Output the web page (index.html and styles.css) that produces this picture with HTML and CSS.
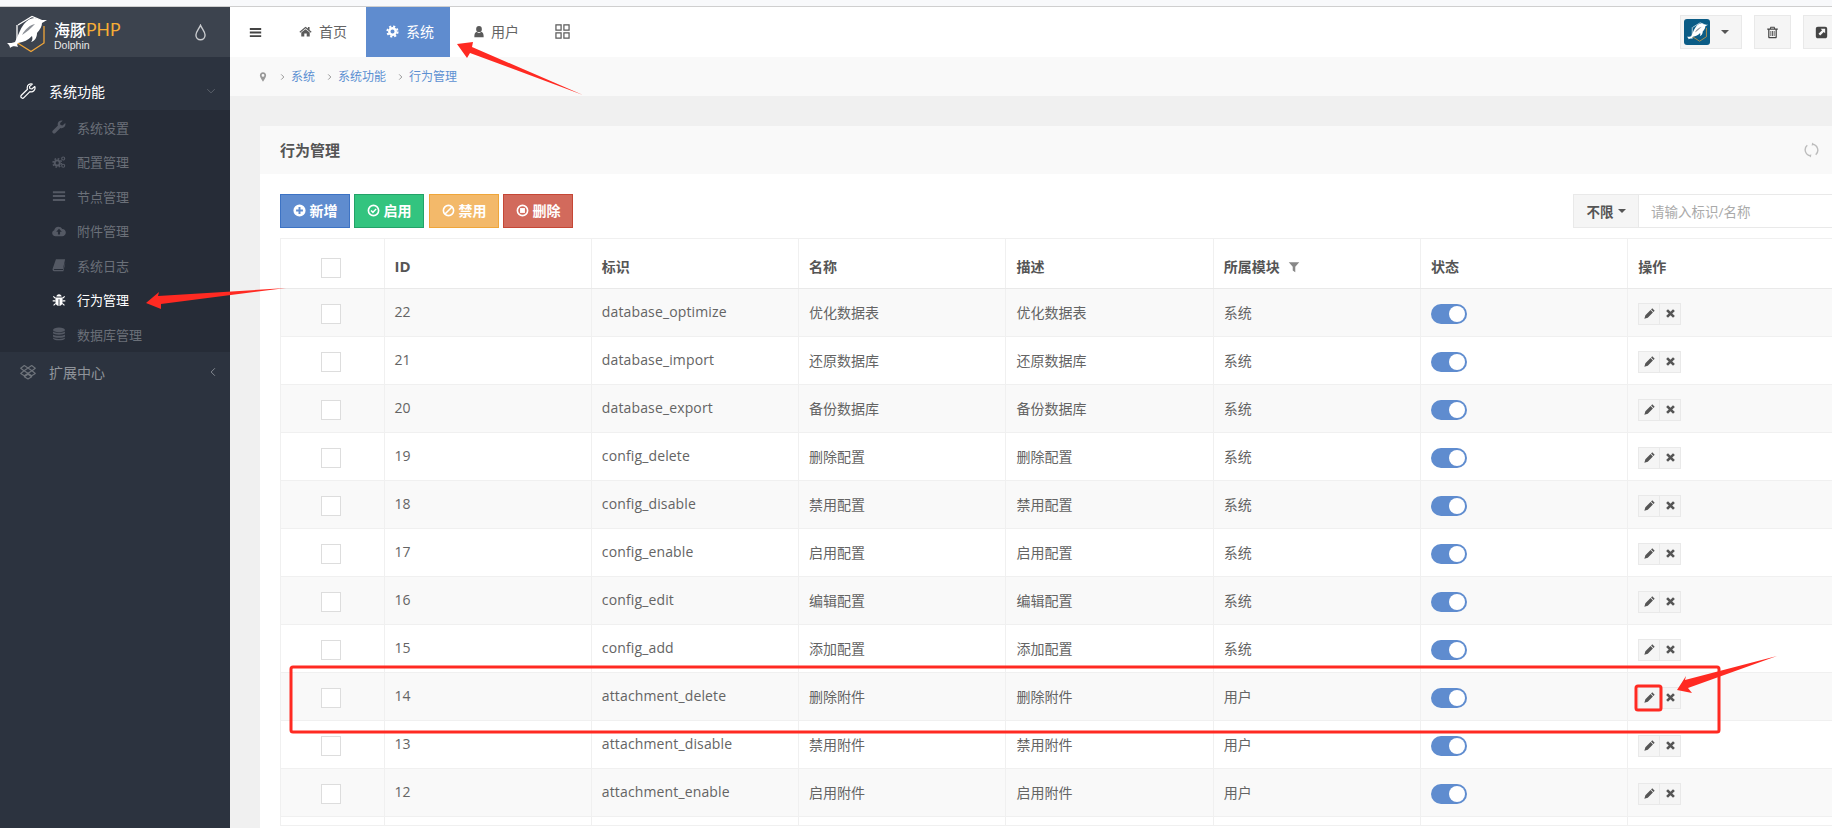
FILE: index.html
```html
<!DOCTYPE html>
<html lang="zh-CN">
<head>
<meta charset="utf-8">
<title>行为管理</title>
<link rel="stylesheet" href="styles.css">
</head>
<body>
<svg class="sprite" aria-hidden="true">
  <symbol id="i-dolphin" viewBox="0 0 40 38">
    <path d="M11 10 L25 1.500 L36 6" fill="none" stroke="currentColor" stroke-width="1.300"/>
    <path d="M10 10 V26" fill="none" stroke="currentColor" stroke-width="1.300"/>
    <path d="M9 27 L24 36.500 L37 28 V11" fill="none" stroke="#f0a63a" stroke-width="1.300"/>
    <path d="M40 5 L33 5 C28 1 22 3 17 9 C13 14 11 21 8 27 C6 28 3 28 0 28 C2 30 3 31 3 33 C5 31 8 31 11 32 C10 30 10 29 11 28 C17 27 21 25 25 21 C26 24 25 26 24 27 C28 26 30 22 30 18 C33 15 35 11 35 8 Z" fill="currentColor"/>
    <path d="M15 20 C18 14 23 10 28 9 C24 13 20 17 15 20 Z" fill="#3c434e" opacity=".6"/>
  </symbol>
  <symbol id="i-home" viewBox="0 0 16 16"><path d="M8 2 L0.500 8.200 L1.500 9.400 L8 4 L14.500 9.400 L15.500 8.200 L13 6.100 V2.500 H11 V4.400 Z M2.800 9.300 V14 H6.500 V10.500 H9.500 V14 H13.200 V9.300 L8 5.100 Z"/></symbol>
  <symbol id="i-cog" viewBox="0 0 16 16"><circle cx="8" cy="8" r="4" fill="none" stroke="currentColor" stroke-width="3"/><circle cx="8" cy="8" r="6.300" fill="none" stroke="currentColor" stroke-width="2.400" stroke-dasharray="2.600 2.350"/></symbol>
  <symbol id="i-user" viewBox="0 0 16 16"><ellipse cx="8" cy="4.800" rx="3.800" ry="4.300"/><path d="M1.800 15.500 C1.500 11 3 8.800 5.300 8.300 C6 9.500 7 10 8 10 C9 10 10 9.500 10.700 8.300 C13 8.800 14.500 11 14.200 15.500 Z"/></symbol>
  <symbol id="i-grid" viewBox="0 0 16 16"><path d="M1 1H6.500V6.500H1Z M9.500 1H15V6.500H9.500Z M1 9.500H6.500V15H1Z M9.500 9.500H15V15H9.500Z" fill="none" stroke="currentColor" stroke-width="1.300"/></symbol>
  <symbol id="i-bars" viewBox="0 0 16 16"><path d="M1 2.500H15V4.800H1Z M1 6.900H15V9.200H1Z M1 11.300H15V13.600H1Z"/></symbol>
  <symbol id="i-pin" viewBox="0 0 16 16"><path fill-rule="evenodd" d="M8 0.500 C4.800 0.500 3 2.800 3 5.500 C3 8.500 6.800 13 8 15.500 C9.200 13 13 8.500 13 5.500 C13 2.800 11.200 0.500 8 0.500 Z M8 3.300 A2.200 2.200 0 1 1 8 7.700 A2.200 2.200 0 1 1 8 3.300 Z"/></symbol>
  <symbol id="i-drop" viewBox="0 0 16 16"><path d="M8 1.200 C6.700 4.500 3.700 7.300 3.700 10.300 C3.700 13 5.600 14.800 8 14.800 C10.400 14.800 12.300 13 12.300 10.300 C12.300 7.300 9.300 4.500 8 1.200 Z" fill="none" stroke="currentColor" stroke-width="1.300"/></symbol>
  <symbol id="i-wrench-o" viewBox="0 0 16 16"><path d="M14.800 3.500 L11.800 6 L9.800 5.500 L9.500 3.600 L12.300 1.100 C9.800 0.300 7.200 2 7.200 4.700 C7.200 5.300 7.300 5.800 7.500 6.200 L1.400 12.200 C0.600 13 0.700 14.100 1.400 14.700 C2.100 15.400 3.200 15.300 3.900 14.600 L9.900 8.600 C12.800 9.600 15.900 7 14.800 3.500 Z" fill="none" stroke="currentColor" stroke-width="1.200" stroke-linejoin="round"/></symbol>
  <symbol id="i-wrench" viewBox="0 0 16 16"><path d="M15.200 3.500 L12 6.400 L9.700 5.800 L9.200 3.500 L12.200 0.800 C9.300 -0.100 6.500 2 6.500 4.800 C6.500 5.400 6.600 5.900 6.800 6.300 L1 12 C0.100 12.900 0.200 14.100 1 14.900 C1.800 15.700 3 15.800 3.900 14.900 L9.600 9.100 C12.800 10.100 16.300 7.500 15.200 3.500 Z"/></symbol>
  <symbol id="i-cogs" viewBox="0 0 16 16"><circle cx="6" cy="9" r="2.900" fill="none" stroke="currentColor" stroke-width="2.200"/><circle cx="6" cy="9" r="4.800" fill="none" stroke="currentColor" stroke-width="1.800" stroke-dasharray="1.900 1.860"/><circle cx="12.800" cy="4" r="1.700" fill="none" stroke="currentColor" stroke-width="1.300"/><circle cx="12.800" cy="12.300" r="1.700" fill="none" stroke="currentColor" stroke-width="1.300"/></symbol>
  <symbol id="i-cloud" viewBox="0 0 16 16"><path fill-rule="evenodd" d="M4 14 C1.800 14 0.200 12.400 0.200 10.400 C0.200 8.800 1.200 7.600 2.600 7.100 C2.800 4.900 4.800 3 7.300 3 C9.200 3 10.800 4 11.600 5.600 C14 5.500 15.800 7.400 15.800 9.800 C15.800 12.100 14 14 11.700 14 Z M8 5.500 L4.800 8.900 H6.800 V12 H9.200 V8.900 H11.200 Z"/></symbol>
  <symbol id="i-book" viewBox="0 0 16 16"><path d="M4.500 1.500 H15 L12.500 12.500 H3 C2 12.500 1.800 13.800 3 13.800 H12.500 L15 5 V6.500 L13 15 H2.500 C0.800 15 0.300 13.500 0.800 12 Z"/></symbol>
  <symbol id="i-bug" viewBox="0 0 16 16"><path d="M5 4 C5 2.400 6.400 1.300 8 1.300 C9.600 1.300 11 2.400 11 4 Z M3.900 5 H12.100 V10 C12.100 12.600 10.500 14.700 8.500 14.900 V7 H7.500 V14.900 C5.500 14.700 3.900 12.600 3.900 10 Z"/><path d="M3.900 6 L1.500 3.800 M12.100 6 L14.500 3.800 M3.900 9 H0.800 M12.100 9 H15.200 M4.300 11.800 L1.800 14.200 M11.700 11.800 L14.200 14.200" fill="none" stroke="currentColor" stroke-width="1.300"/></symbol>
  <symbol id="i-db" viewBox="0 0 16 16"><ellipse cx="8" cy="3.300" rx="6.800" ry="2.700"/><path d="M1.200 5 C2 7 14 7 14.800 5 V7.200 C14 9.300 2 9.300 1.200 7.200 Z M1.200 8.600 C2 10.600 14 10.600 14.800 8.600 V10.800 C14 12.900 2 12.900 1.200 10.800 Z M1.200 12.100 C2 14.100 14 14.100 14.800 12.100 V13 C14 15.800 2 15.800 1.200 13 Z"/></symbol>
  <symbol id="i-dropbox" viewBox="0 0 16 16"><path d="M4.300 1.500 L8 4 L11.700 1.500 L15.300 4.200 L12 6.800 L15.300 9.500 L11.700 11.800 L8 9.300 L4.300 11.800 L0.700 9.500 L4 6.800 L0.700 4.200 Z M4 6.800 L8 9.300 L12 6.800 L8 4 Z M4.300 12.700 L8 10.300 L11.700 12.700 L8 15 Z" fill="none" stroke="currentColor" stroke-width="1.100" stroke-linejoin="round"/></symbol>
  <symbol id="i-down" viewBox="0 0 16 16"><path d="M2 5 L8 11 L14 5" fill="none" stroke="currentColor" stroke-width="1.500"/></symbol>
  <symbol id="i-left" viewBox="0 0 16 16"><path d="M11 2 L5 8 L11 14" fill="none" stroke="currentColor" stroke-width="1.500"/></symbol>
  <symbol id="i-right" viewBox="0 0 16 16"><path d="M5 2 L11 8 L5 14" fill="none" stroke="currentColor" stroke-width="2"/></symbol>
  <symbol id="i-trash" viewBox="0 0 16 16"><path fill-rule="evenodd" d="M5.500 1 H10.500 L11.300 3 H14.500 V4.500 H13.300 V13.500 C13.300 14.500 12.700 15 12 15 H4 C3.300 15 2.700 14.500 2.700 13.500 V4.500 H1.500 V3 H4.700 Z M6.300 2.300 L6 3 H10 L9.700 2.300 Z M4.200 4.500 V13.500 H11.800 V4.500 Z M5.500 6 H6.500 V12.300 H5.500 Z M7.500 6 H8.500 V12.300 H7.500 Z M9.500 6 H10.500 V12.300 H9.500 Z"/></symbol>
  <symbol id="i-ext" viewBox="0 0 16 16"><path fill-rule="evenodd" d="M3.500 1 H12.500 C14 1 15 2 15 3.500 V12.500 C15 14 14 15 12.500 15 H3.500 C2 15 1 14 1 12.500 V3.500 C1 2 2 1 3.500 1 Z M7 3.500 L8.700 5.200 L4.300 9.600 L6.400 11.700 L10.800 7.300 L12.500 9 V3.500 Z"/></symbol>
  <symbol id="i-refresh" viewBox="0 0 16 16"><path d="M9 1.800 A6.400 6.400 0 0 1 12.500 13 M7 14.200 A6.400 6.400 0 0 1 3.500 3" fill="none" stroke="currentColor" stroke-width="1.500"/><path d="M8.600 0 L10.800 2.200 L8.200 3.500 Z M7.400 16 L5.200 13.800 L7.800 12.500 Z"/></symbol>
  <symbol id="i-filter" viewBox="0 0 16 16"><path d="M1 1.500 H15 L9.700 7.800 V15 L6.300 12.500 V7.800 Z"/></symbol>
  <symbol id="i-pencil" viewBox="0 0 16 16"><path d="M12 0.500 L15.500 4 L13.800 5.700 L10.300 2.200 Z M9.500 3 L13 6.500 L5.500 14 L0.500 15.500 L2 10.500 Z"/></symbol>
  <symbol id="i-times" viewBox="0 0 16 16"><path d="M3 3 L13 13 M13 3 L3 13" fill="none" stroke="currentColor" stroke-width="3.800"/></symbol>
  <symbol id="i-plus-c" viewBox="0 0 16 16"><path fill-rule="evenodd" d="M8 0.500 A7.500 7.500 0 1 1 8 15.500 A7.500 7.500 0 1 1 8 0.500 Z M6.800 3.800 V6.800 H3.800 V9.200 H6.800 V12.200 H9.200 V9.200 H12.200 V6.800 H9.200 V3.800 Z"/></symbol>
  <symbol id="i-check-c" viewBox="0 0 16 16"><circle cx="8" cy="8" r="6.300" fill="none" stroke="currentColor" stroke-width="2"/><path d="M5 8 L7.300 10.300 L11.300 6" fill="none" stroke="currentColor" stroke-width="1.800"/></symbol>
  <symbol id="i-ban" viewBox="0 0 16 16"><circle cx="8" cy="8" r="6.300" fill="none" stroke="currentColor" stroke-width="2"/><path d="M3.700 12.300 L12.300 3.700" stroke="currentColor" stroke-width="2"/></symbol>
  <symbol id="i-stop-c" viewBox="0 0 16 16"><circle cx="8" cy="8" r="6.300" fill="none" stroke="currentColor" stroke-width="2"/><rect x="5" y="5" width="6" height="6"/></symbol>
</svg>

<div class="strip"></div>
<div class="layout">
  <aside class="sidebar">
    <div class="brand">
      <svg class="brand-mark"><use href="#i-dolphin"/></svg>
      <div class="brand-text">
        <div class="brand-name">海豚<span class="brand-php">PHP</span></div>
        <div class="brand-sub">Dolphin</div>
      </div>
      <svg class="brand-drop"><use href="#i-drop"/></svg>
    </div>
    <div class="menu-head is-open">
      <svg class="menu-ico"><use href="#i-wrench-o"/></svg><span class="menu-label">系统功能</span>
      <svg class="menu-arrow"><use href="#i-down"/></svg>
    </div>
    <ul class="submenu">
      <li class="sub-item"><svg class="sub-ico"><use href="#i-wrench"/></svg>系统设置</li>
      <li class="sub-item"><svg class="sub-ico"><use href="#i-cogs"/></svg>配置管理</li>
      <li class="sub-item"><svg class="sub-ico"><use href="#i-bars"/></svg>节点管理</li>
      <li class="sub-item"><svg class="sub-ico"><use href="#i-cloud"/></svg>附件管理</li>
      <li class="sub-item"><svg class="sub-ico"><use href="#i-book"/></svg>系统日志</li>
      <li class="sub-item is-active"><svg class="sub-ico"><use href="#i-bug"/></svg>行为管理</li>
      <li class="sub-item"><svg class="sub-ico"><use href="#i-db"/></svg>数据库管理</li>
    </ul>
    <div class="menu-head is-closed">
      <svg class="menu-ico"><use href="#i-dropbox"/></svg><span class="menu-label">扩展中心</span>
      <svg class="menu-arrow"><use href="#i-left"/></svg>
    </div>
  </aside>

  <main class="main">
    <header class="topbar">
      <div class="nav-toggle"><svg class="nav-bars"><use href="#i-bars"/></svg></div>
      <nav class="nav">
        <a class="nav-item nav-home"><svg class="nav-ico"><use href="#i-home"/></svg>首页</a>
        <a class="nav-item is-current"><svg class="nav-ico"><use href="#i-cog"/></svg>系统</a>
        <a class="nav-item nav-user"><svg class="nav-ico"><use href="#i-user"/></svg>用户</a>
        <a class="nav-item"><svg class="nav-grid"><use href="#i-grid"/></svg></a>
      </nav>
      <div class="tools">
        <div class="tool tool-avatar">
          <span class="avatar"><svg class="avatar-mark"><use href="#i-dolphin"/></svg></span>
          <span class="caret"></span>
        </div>
        <div class="tool"><svg class="tool-ico"><use href="#i-trash"/></svg></div>
        <div class="tool"><svg class="tool-ico"><use href="#i-ext"/></svg></div>
      </div>
    </header>

    <div class="crumbs">
      <svg class="crumb-pin"><use href="#i-pin"/></svg>
      <svg class="crumb-sep"><use href="#i-right"/></svg><a class="crumb">系统</a>
      <svg class="crumb-sep"><use href="#i-right"/></svg><a class="crumb">系统功能</a>
      <svg class="crumb-sep"><use href="#i-right"/></svg><a class="crumb">行为管理</a>
    </div>

    <section class="card">
      <div class="card-head">
        <h3 class="card-title">行为管理</h3>
        <svg class="card-refresh"><use href="#i-refresh"/></svg>
      </div>
      <div class="card-body">
        <div class="toolbar">
          <div class="btns">
            <button class="btn btn-primary"><svg class="btn-ico"><use href="#i-plus-c"/></svg>新增</button>
            <button class="btn btn-success"><svg class="btn-ico"><use href="#i-check-c"/></svg>启用</button>
            <button class="btn btn-warning"><svg class="btn-ico"><use href="#i-ban"/></svg>禁用</button>
            <button class="btn btn-danger"><svg class="btn-ico"><use href="#i-stop-c"/></svg>删除</button>
          </div>
          <div class="search">
            <span class="search-type">不限<span class="caret caret-sm"></span></span>
            <span class="search-input">请输入标识/名称</span>
          </div>
        </div>

        <table class="grid">
          <colgroup><col class="c-check"><col class="c-col"><col class="c-col"><col class="c-col"><col class="c-col"><col class="c-col"><col class="c-col"><col class="c-col"></colgroup>
          <thead>
            <tr><th><span class="check"></span></th><th class="th-id">ID</th><th>标识</th><th>名称</th><th>描述</th><th>所属模块<svg class="th-filter"><use href="#i-filter"/></svg></th><th>状态</th><th>操作</th></tr>
          </thead>
          <tbody>
            <tr><td><span class="check"></span></td><td>22</td><td class="td-key">database_optimize</td><td>优化数据表</td><td>优化数据表</td><td>系统</td><td><span class="switch"></span></td><td><span class="acts"><span class="act"><svg class="act-ico"><use href="#i-pencil"/></svg></span><span class="act"><svg class="act-ico"><use href="#i-times"/></svg></span></span></td></tr>
            <tr><td><span class="check"></span></td><td>21</td><td class="td-key">database_import</td><td>还原数据库</td><td>还原数据库</td><td>系统</td><td><span class="switch"></span></td><td><span class="acts"><span class="act"><svg class="act-ico"><use href="#i-pencil"/></svg></span><span class="act"><svg class="act-ico"><use href="#i-times"/></svg></span></span></td></tr>
            <tr><td><span class="check"></span></td><td>20</td><td class="td-key">database_export</td><td>备份数据库</td><td>备份数据库</td><td>系统</td><td><span class="switch"></span></td><td><span class="acts"><span class="act"><svg class="act-ico"><use href="#i-pencil"/></svg></span><span class="act"><svg class="act-ico"><use href="#i-times"/></svg></span></span></td></tr>
            <tr><td><span class="check"></span></td><td>19</td><td class="td-key">config_delete</td><td>删除配置</td><td>删除配置</td><td>系统</td><td><span class="switch"></span></td><td><span class="acts"><span class="act"><svg class="act-ico"><use href="#i-pencil"/></svg></span><span class="act"><svg class="act-ico"><use href="#i-times"/></svg></span></span></td></tr>
            <tr><td><span class="check"></span></td><td>18</td><td class="td-key">config_disable</td><td>禁用配置</td><td>禁用配置</td><td>系统</td><td><span class="switch"></span></td><td><span class="acts"><span class="act"><svg class="act-ico"><use href="#i-pencil"/></svg></span><span class="act"><svg class="act-ico"><use href="#i-times"/></svg></span></span></td></tr>
            <tr><td><span class="check"></span></td><td>17</td><td class="td-key">config_enable</td><td>启用配置</td><td>启用配置</td><td>系统</td><td><span class="switch"></span></td><td><span class="acts"><span class="act"><svg class="act-ico"><use href="#i-pencil"/></svg></span><span class="act"><svg class="act-ico"><use href="#i-times"/></svg></span></span></td></tr>
            <tr><td><span class="check"></span></td><td>16</td><td class="td-key">config_edit</td><td>编辑配置</td><td>编辑配置</td><td>系统</td><td><span class="switch"></span></td><td><span class="acts"><span class="act"><svg class="act-ico"><use href="#i-pencil"/></svg></span><span class="act"><svg class="act-ico"><use href="#i-times"/></svg></span></span></td></tr>
            <tr><td><span class="check"></span></td><td>15</td><td class="td-key">config_add</td><td>添加配置</td><td>添加配置</td><td>系统</td><td><span class="switch"></span></td><td><span class="acts"><span class="act"><svg class="act-ico"><use href="#i-pencil"/></svg></span><span class="act"><svg class="act-ico"><use href="#i-times"/></svg></span></span></td></tr>
            <tr><td><span class="check"></span></td><td>14</td><td class="td-key">attachment_delete</td><td>删除附件</td><td>删除附件</td><td>用户</td><td><span class="switch"></span></td><td><span class="acts"><span class="act"><svg class="act-ico"><use href="#i-pencil"/></svg></span><span class="act"><svg class="act-ico"><use href="#i-times"/></svg></span></span></td></tr>
            <tr><td><span class="check"></span></td><td>13</td><td class="td-key">attachment_disable</td><td>禁用附件</td><td>禁用附件</td><td>用户</td><td><span class="switch"></span></td><td><span class="acts"><span class="act"><svg class="act-ico"><use href="#i-pencil"/></svg></span><span class="act"><svg class="act-ico"><use href="#i-times"/></svg></span></span></td></tr>
            <tr><td><span class="check"></span></td><td>12</td><td class="td-key">attachment_enable</td><td>启用附件</td><td>启用附件</td><td>用户</td><td><span class="switch"></span></td><td><span class="acts"><span class="act"><svg class="act-ico"><use href="#i-pencil"/></svg></span><span class="act"><svg class="act-ico"><use href="#i-times"/></svg></span></span></td></tr>
            <tr class="row-tail"><td></td><td></td><td></td><td></td><td></td><td></td><td></td><td></td></tr>
          </tbody>
        </table>
      </div>
    </section>
  </main>
</div>

<svg class="marks" viewBox="0 0 1832 828" aria-hidden="true">
  <polygon class="mark-fill" points="457,44 473,42 472,47 583,95 470,53 467,58"/>
  <polygon class="mark-fill" points="146,303 159,292 158,296 286,288 161,304 161,309"/>
  <polygon class="mark-fill" points="1677,690 1686,676 1685,680 1777,656 1688,688 1692,693"/>
  <rect class="mark-line" x="291" y="667" width="1428" height="65" rx="2"/>
  <rect class="mark-line" x="1636" y="686" width="25" height="24" rx="2"/>
</svg>
</body>
</html>
```

FILE: styles.css
```css
* { box-sizing: border-box; }
html, body { margin: 0; padding: 0; height: 828px; overflow: hidden; background: #fff; }
body { position: relative; font-family: "Open Sans", "Noto Sans CJK SC", sans-serif; font-size: 14px; color: #646464; }
a { color: inherit; text-decoration: none; }
ul { list-style: none; margin: 0; padding: 0; }
svg { fill: currentColor; display: block; flex: none; }
.sprite { position: absolute; width: 0; height: 0; }

.strip { height: 7px; background: #f8f9fb; border-bottom: 1px solid #cfcfcf; }
.layout { display: flex; height: 821px; width: 1880px; }

/* sidebar */
.sidebar { width: 230px; flex: none; background: #2c333f; }
.brand { height: 50px; display: flex; align-items: center; background: #3c434e; padding-left: 7px; color: #fff; }
.brand-mark { width: 40px; height: 38px; margin-top: 3px; }
.brand-text { margin: 7px 0 0 7px; width: 119px; }
.brand-name { font-size: 16px; line-height: 18px; font-weight: 500; color: #fff; white-space: nowrap; }
.brand-php { font-family: "Lato", sans-serif; font-weight: 400; font-size: 17.500px; color: #f7ad35; }
.brand-sub { font-family: "Liberation Sans", sans-serif; font-size: 10.500px; line-height: 12px; color: #e8e8e8; }
.brand-drop { width: 17px; height: 17px; margin-left: 19px; color: #c9cbce; }
.menu-head { height: 53px; display: flex; align-items: center; padding-left: 20px; position: relative; }
.menu-head.is-open { color: #fff; padding-top: 14px; }
.menu-head.is-closed { height: 40px; padding-bottom: 1px; color: #8f939a; }
.menu-ico { width: 16px; height: 16px; }
.is-closed .menu-ico { color: #6f747b; }
.menu-label { margin-left: 13px; font-size: 14px; }
.menu-arrow { width: 10px; height: 10px; margin-left: 101px; color: #5d636d; }
.is-closed .menu-arrow { color: #888d94; margin-left: 103px; }
.submenu { background: #262c37; height: 242px; }
.sub-item { height: 34.500px; display: flex; align-items: center; padding-left: 52px; font-size: 13px; color: #6b7079; }
.sub-item.is-active { color: #fff; }
.sub-ico { width: 14px; height: 14px; margin-right: 11px; color: #545964; }
.is-active .sub-ico { color: #fff; }

/* main */
.main { width: 1650px; flex: none; background: #f0f0f0; }
.topbar { height: 50px; display: flex; align-items: center; background: #fff; padding-right: 40px; }
.nav-toggle { width: 49px; height: 50px; display: flex; align-items: center; padding-left: 19px; color: #444; }
.nav-bars { width: 13px; height: 13px; }
.nav { display: flex; height: 50px; }
.nav-item { display: flex; align-items: center; gap: 7px; padding: 0 16px 2px 20px; height: 50px; font-size: 14px; color: #646464; }
.nav-home { padding-right: 19px; }
.nav-user { padding-left: 23px; gap: 6px; }
.nav-ico { width: 13px; height: 13px; color: #5a5a5a; }
.nav-user .nav-ico { width: 12px; }
.nav-grid { width: 15px; height: 15px; color: #5a5a5a; }
.nav-item.is-current { background: #5f8ccf; color: #fff; }
.is-current .nav-ico { color: #fff; }
.tools { margin-left: auto; display: flex; gap: 12px; }
.tool { width: 37px; height: 34px; background: #f5f5f5; border: 1px solid #e9e9e9; display: flex; align-items: center; justify-content: center; }
.tool-avatar { width: 62px; justify-content: flex-start; padding-left: 3px; }
.avatar { width: 26px; height: 26px; background: #0b5c86; border-radius: 3px; display: flex; align-items: center; justify-content: center; color: #fff; }
.avatar-mark { width: 21px; height: 20px; }
.caret { width: 0; height: 0; border-left: 4px solid transparent; border-right: 4px solid transparent; border-top: 4px solid #555; margin-left: 11px; }
.caret-sm { display: inline-block; margin-left: 4px; vertical-align: middle; }
.tool-ico { width: 13px; height: 13px; color: #444; }

.crumbs { height: 39px; background: #f9f9f9; display: flex; align-items: center; padding: 0 0 0 28px; font-size: 12px; color: #5c90d2; }
.crumb-pin { width: 10px; height: 12px; color: #999; }
.crumb-sep { width: 7px; height: 8px; margin: 0 5px 0 11px; color: #8a8a8a; }
.crumb { line-height: 12px; }

.card { margin: 30px 30px 0; background: #fff; height: 702px; }
.card-head { height: 48px; background: #f9f9f9; display: flex; align-items: center; justify-content: space-between; padding: 0 31px 0 20px; }
.card-title { margin: 0 0 2px; font-size: 15px; font-weight: 700; color: #555; }
.card-refresh { width: 15px; height: 16px; color: #bcbcbc; }
.card-body { padding: 20px; }
.toolbar { display: flex; justify-content: space-between; width: 1556px; height: 34px; margin-bottom: 10px; }
.btns { display: flex; }
.btn { width: 70px; height: 34px; margin-right: 4px; border: 1px solid; font: 700 14px "Open Sans", "Noto Sans CJK SC", sans-serif; color: #fff; display: flex; align-items: center; justify-content: center; gap: 4px; padding: 0 0 2px; }
.btn-ico { width: 13px; height: 13px; }
.btn-primary { background: #5f8ccf; border-color: #3d73c4; }
.btn-success { background: #33c47f; border-color: #23a268; }
.btn-warning { background: #f3b96a; border-color: #efa63a; margin-left: 1px; }
.btn-danger { background: #d26a5c; border-color: #c54736; }
.search { display: flex; height: 34px; }
.search-type { width: 66px; border: 1px solid #e9e9e9; background: #f5f5f5; display: flex; align-items: center; justify-content: center; font-weight: 700; font-size: 13.500px; color: #555; }
.search-input { width: 197px; border: 1px solid #e9e9e9; border-left: 0; padding-left: 12px; display: flex; align-items: center; font-size: 13.500px; color: #aaa; }

.grid { border-collapse: collapse; table-layout: fixed; width: 1554.600px; border: 1px solid #ececec; }
.c-check { width: 103.500px; }
.c-col { width: 207.300px; }
.grid th, .grid td { border: 1px solid #f0f0f0; text-align: left; vertical-align: middle; padding: 0 10px; font-size: 14px; overflow: hidden; white-space: nowrap; }
.grid th { height: 50px; padding-top: 4px; font-weight: 700; color: #555; border-bottom: 1px solid #e9e9e9; }
.grid td { height: 48px; padding-bottom: 2px; color: #646464; }
.grid td.td-key { letter-spacing: .14px; }
.grid th.th-id { font-size: 15px; }
.grid tbody tr:nth-child(odd) td { background: #f9f9f9; }
.grid tbody tr.row-tail td { height: 9px; padding: 0; background: #fff; }
.th-filter { display: inline-block; width: 12px; height: 12px; margin-left: 8px; vertical-align: -1px; color: #888; }
.check { display: block; width: 20px; height: 20px; background: #fff; border: 1px solid #ddd; margin: 4px 0 0 30px; }
.switch { display: block; position: relative; width: 36px; height: 20px; border-radius: 10px; background: #5f8ccf; margin-top: 4px; }
.switch::after { content: ""; position: absolute; right: 2px; top: 2px; width: 16px; height: 16px; border-radius: 50%; background: #fff; }
.acts { display: flex; margin-top: 4px; }
.act { width: 22px; height: 22px; background: #f5f5f5; border: 1px solid #e9e9e9; margin-right: -1px; display: flex; align-items: center; justify-content: center; color: #555; }
.act-ico { width: 11px; height: 11px; }

/* annotations lying over the screenshot */
.marks { position: absolute; left: 0; top: 0; width: 1832px; height: 828px; pointer-events: none; }
.mark-fill { fill: #ff2a22; }
.mark-line { fill: none; stroke: #ff2a22; stroke-width: 3; }
```
